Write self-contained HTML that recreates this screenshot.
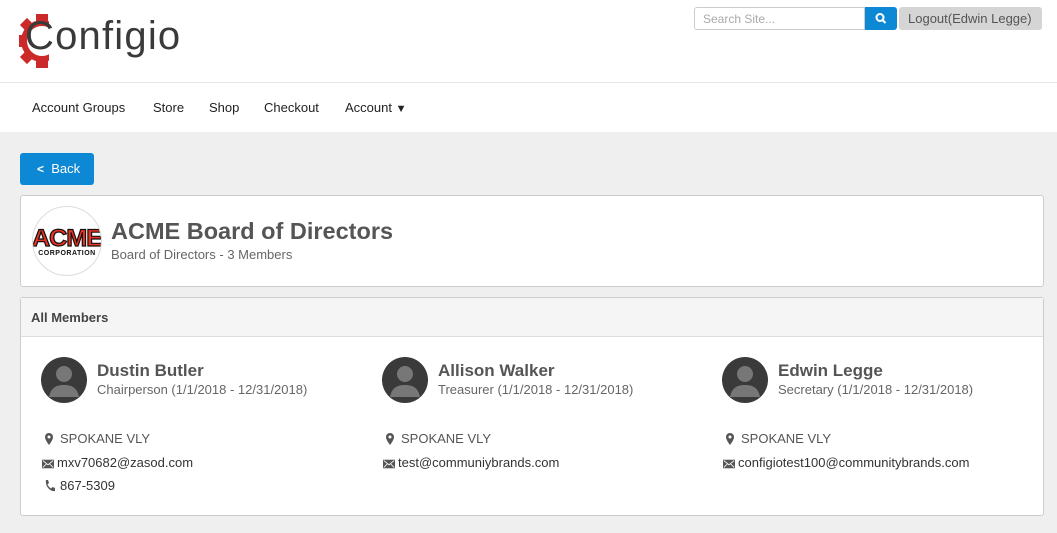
<!DOCTYPE html>
<html><head><meta charset="utf-8"><style>
*{box-sizing:border-box;margin:0;padding:0}
body{width:1057px;height:533px;overflow:hidden;background:#efefef;font-family:"Liberation Sans",sans-serif;color:#333;font-size:13px;position:relative}
.hdr{position:absolute;left:0;top:0;width:1057px;height:132px;background:#fff}
.hdr .line{position:absolute;left:0;top:82px;width:100%;height:1px;background:#e6e6e6}
.nav span{position:absolute;top:100px;font-size:13px;color:#222}
.panel{position:absolute;background:#fff;border:1px solid #ccc;border-radius:3px}
.abs{position:absolute}
.name{font-size:17px;font-weight:bold;color:#555}
.role{font-size:13px;color:#666}
.pin{position:absolute;width:12px;height:14px}.row{position:absolute;font-size:13px;color:#333;white-space:nowrap}
</style></head><body>
<div class="hdr">
 <svg class="abs" style="left:19px;top:13px" width="45" height="56" viewBox="0 0 45 56">
  <defs><mask id="mk"><rect width="45" height="56" fill="#fff"/><circle cx="23" cy="28" r="15" fill="#000"/><rect x="30" y="0" width="16" height="56" fill="#000"/></mask></defs>
  <g fill="#cc2a2a" mask="url(#mk)">
   <circle cx="23" cy="28" r="21"/>
   <rect x="17" y="1" width="12" height="8"/>
   <rect x="17" y="47" width="12" height="8"/>
   <rect x="0" y="22" width="8" height="12"/>
   <rect x="3" y="7" width="10" height="10" transform="rotate(45 8 12)"/>
   <rect x="3" y="39" width="10" height="10" transform="rotate(45 8 44)"/>
  </g>
 </svg>
 <div class="abs" style="left:25px;top:14px;font-size:40px;color:#3a3a3a;letter-spacing:1.2px">Configio</div>
 <div class="abs" style="left:694px;top:7px;width:171px;height:23px;border:1px solid #ccc;border-radius:3px 0 0 3px;font-size:12px;color:#aaa;padding:4px 8px">Search Site...</div>
 <div class="abs" style="left:865px;top:7px;width:32px;height:23px;background:#0d88d4;border-radius:0 3px 3px 0">
  <svg width="32" height="23"><circle cx="15" cy="10.5" r="3.5" fill="none" stroke="#fff" stroke-width="2"/><path d="M17.5 13l3 3" stroke="#fff" stroke-width="2"/></svg>
 </div>
 <div class="abs" style="left:899px;top:7px;width:143px;height:23px;background:#d5d5d5;border-radius:3px;font-size:13px;color:#555;padding:4px 0 0 9px">Logout(Edwin Legge)</div>
 <div class="line"></div>
 <div class="nav"><span style="left:32px">Account Groups</span><span style="left:153px">Store</span><span style="left:209px">Shop</span><span style="left:264px">Checkout</span><span style="left:345px">Account <span style="font-size:11px;position:static">▼</span></span></div>
</div>
<div class="abs" style="left:20px;top:153px;width:74px;height:32px;background:#0d88d4;border-radius:3px;color:#fff;font-size:13px;padding:8px 0 0 17px"><b style="font-size:12px">&lt;</b>&nbsp; Back</div>
<div class="panel" style="left:20px;top:195px;width:1024px;height:92px">
 <div class="abs" style="left:11px;top:10px;width:70px;height:70px;border-radius:50%;border:1px solid #ddd;overflow:hidden">
  <div class="abs" style="left:0px;top:18px;width:68px;text-align:center;font-size:24px;font-weight:900;color:#e32;-webkit-text-stroke:1.2px #111;letter-spacing:-1px;transform:scaleX(1.05)">ACME</div>
  <div class="abs" style="left:0;top:43px;width:68px;text-align:center;font-size:7px;font-weight:bold;color:#111;letter-spacing:0.5px">CORPORATION</div>
 </div>
 <div class="abs" style="left:90px;top:22px;font-size:23.5px;font-weight:bold;color:#555">ACME Board of Directors</div>
 <div class="abs" style="left:90px;top:51px;font-size:13px;color:#666">Board of Directors - 3 Members</div>
</div>
<div class="panel" style="left:20px;top:297px;width:1024px;height:219px">
 <div class="abs" style="left:0;top:0;width:1022px;height:39px;background:#f5f5f5;border-bottom:1px solid #ddd;font-weight:bold;font-size:13px;color:#444;padding:12px 10px">All Members</div>
</div>
<div class="abs" style="left:41px;top:357px">
 <svg width="46" height="46"><circle cx="23" cy="23" r="23" fill="#3a3a3a"/><circle cx="23" cy="17" r="8" fill="#777"/><path d="M8 40c2-10 8-12 15-12s13 2 15 12z" fill="#777"/></svg>
 <div class="abs name" style="left:56px;top:4px;white-space:nowrap">Dustin Butler</div>
 <div class="abs role" style="left:56px;top:25px;white-space:nowrap">Chairperson (1/1/2018 - 12/31/2018)</div>
</div>
<div class="abs" style="left:382px;top:357px">
 <svg width="46" height="46"><circle cx="23" cy="23" r="23" fill="#3a3a3a"/><circle cx="23" cy="17" r="8" fill="#777"/><path d="M8 40c2-10 8-12 15-12s13 2 15 12z" fill="#777"/></svg>
 <div class="abs name" style="left:56px;top:4px;white-space:nowrap">Allison Walker</div>
 <div class="abs role" style="left:56px;top:25px;white-space:nowrap">Treasurer (1/1/2018 - 12/31/2018)</div>
</div>
<div class="abs" style="left:722px;top:357px">
 <svg width="46" height="46"><circle cx="23" cy="23" r="23" fill="#3a3a3a"/><circle cx="23" cy="17" r="8" fill="#777"/><path d="M8 40c2-10 8-12 15-12s13 2 15 12z" fill="#777"/></svg>
 <div class="abs name" style="left:56px;top:4px;white-space:nowrap">Edwin Legge</div>
 <div class="abs role" style="left:56px;top:25px;white-space:nowrap">Secretary (1/1/2018 - 12/31/2018)</div>
</div>
<svg class="pin" style="left:43px;top:432px" viewBox="0 0 12 14"><path d="M6 1a4 4 0 0 1 4 4c0 3-4 8-4 8S2 8 2 5a4 4 0 0 1 4-4z" fill="#555"/><circle cx="6" cy="5" r="1.5" fill="#fff"/></svg>
<div class="row" style="left:60px;top:431px;color:#555">SPOKANE VLY</div>
<svg class="pin" style="left:42px;top:457px" viewBox="0 0 14 10"><rect x="0" y="0" width="14" height="10" fill="#555"/><path d="M1 1l6 5 6-5M1 9l4-4M13 9l-4-4" stroke="#fff" fill="none"/></svg>
<div class="row" style="left:57px;top:455px">mxv70682@zasod.com</div>
<svg class="pin" style="left:43px;top:479px" viewBox="0 0 12 14"><path d="M3 1l2 0 1 3-1.5 1.5c1 2 2 3 3.5 4L9.5 8l2.5 1v3c-5 1-10-5-9-11z" fill="#555"/></svg>
<div class="row" style="left:60px;top:478px">867-5309</div>

<svg class="pin" style="left:384px;top:432px" viewBox="0 0 12 14"><path d="M6 1a4 4 0 0 1 4 4c0 3-4 8-4 8S2 8 2 5a4 4 0 0 1 4-4z" fill="#555"/><circle cx="6" cy="5" r="1.5" fill="#fff"/></svg>
<div class="row" style="left:401px;top:431px;color:#555">SPOKANE VLY</div>
<svg class="pin" style="left:383px;top:457px" viewBox="0 0 14 10"><rect x="0" y="0" width="14" height="10" fill="#555"/><path d="M1 1l6 5 6-5M1 9l4-4M13 9l-4-4" stroke="#fff" fill="none"/></svg>
<div class="row" style="left:398px;top:455px">test@communiybrands.com</div>

<svg class="pin" style="left:724px;top:432px" viewBox="0 0 12 14"><path d="M6 1a4 4 0 0 1 4 4c0 3-4 8-4 8S2 8 2 5a4 4 0 0 1 4-4z" fill="#555"/><circle cx="6" cy="5" r="1.5" fill="#fff"/></svg>
<div class="row" style="left:741px;top:431px;color:#555">SPOKANE VLY</div>
<svg class="pin" style="left:723px;top:457px" viewBox="0 0 14 10"><rect x="0" y="0" width="14" height="10" fill="#555"/><path d="M1 1l6 5 6-5M1 9l4-4M13 9l-4-4" stroke="#fff" fill="none"/></svg>
<div class="row" style="left:738px;top:455px">configiotest100@communitybrands.com</div>
</body></html>
